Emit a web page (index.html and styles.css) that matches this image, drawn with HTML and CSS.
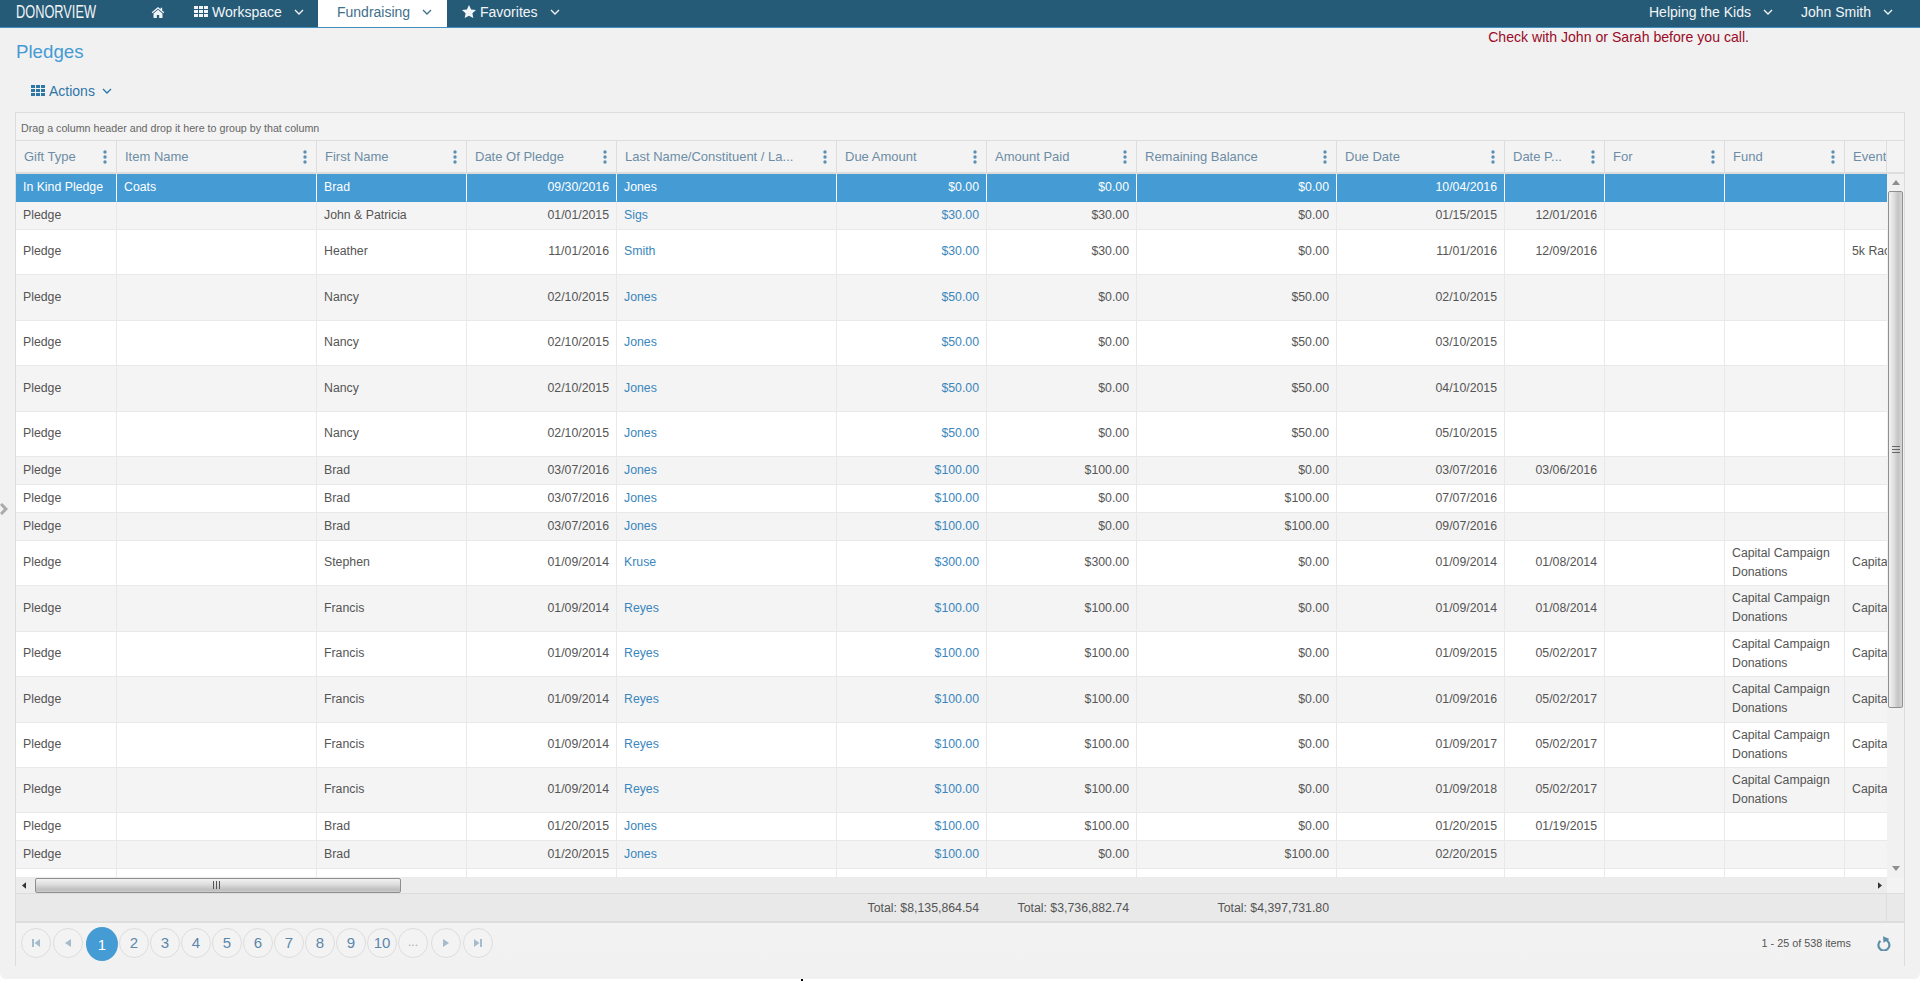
FILE: index.html
```html
<!DOCTYPE html>
<html lang="en">
<head>
<meta charset="utf-8">
<title>Pledges</title>
<link rel="stylesheet" href="styles.css">
</head>
<body>
<svg class="defs" aria-hidden="true">
  <symbol id="chev" viewBox="0 0 10 6"><path d="M1 1l4 4 4-4" fill="none" stroke="currentColor" stroke-width="1.3"/></symbol>
  <symbol id="grid" viewBox="0 0 14 11"><path fill="currentColor" d="M0 0h4v3H0zM5 0h4v3H5zM10 0h4v3h-4zM0 4h4v3H0zM5 4h4v3H5zM10 4h4v3h-4zM0 8h4v3H0zM5 8h4v3H5zM10 8h4v3h-4z"/></symbol>
  <symbol id="kebab" viewBox="0 0 4 14"><g fill="currentColor"><circle cx="2" cy="2" r="1.7"/><circle cx="2" cy="7" r="1.7"/><circle cx="2" cy="12" r="1.7"/></g></symbol>
</svg>
<div class="page">
  <nav class="nav">
    <span class="brand"><span class="brand-text">DONORVIEW</span></span>
    <a class="nav-home"><svg class="home" viewBox="0 0 16 14"><path fill="currentColor" d="M8 0 0 6.700l1 1.200L8 2.100l7 5.800 1-1.200-2.700-2.300V1h-2v2z"/><path fill="currentColor" d="M8 3.500 2.300 8.300V14h4.200v-3.700h3V14h4.200V8.300z"/></svg></a>
    <a class="nav-item nav-work"><svg class="ico-grid"><use href="#grid"/></svg>Workspace<svg class="chev"><use href="#chev"/></svg></a>
    <a class="nav-item nav-active">Fundraising<svg class="chev"><use href="#chev"/></svg></a>
    <a class="nav-item nav-fav"><svg class="star" viewBox="0 0 14 13"><path fill="currentColor" d="M7 0l2.100 4.400 4.900.6-3.600 3.300.9 4.700L7 10.700 2.700 13l.9-4.700L0 5l4.900-.6z"/></svg>Favorites<svg class="chev"><use href="#chev"/></svg></a>
    <a class="nav-item nav-org">Helping the Kids<svg class="chev"><use href="#chev"/></svg></a>
    <a class="nav-item nav-user">John Smith<svg class="chev"><use href="#chev"/></svg></a>
  </nav>
  <div class="titlebar">
    <h1 class="title">Pledges</h1>
    <p class="note">Check with John or Sarah before you call.</p>
  </div>
  <div class="actions"><svg class="ico-grid"><use href="#grid"/></svg>Actions<svg class="chev"><use href="#chev"/></svg></div>
  <svg class="side-handle" viewBox="0 0 8 12"><path d="M1 1l5 5-5 5" fill="none" stroke="currentColor" stroke-width="3"/></svg>

  <section class="grid">
    <div class="group-bar">Drag a column header and drop it here to group by that column</div>
    <div class="grid-head">
      <div class="clip">
        <table class="tbl head-tbl">
          <colgroup><col class="c1"><col class="c2"><col class="c3"><col class="c4"><col class="c5"><col class="c6"><col class="c7"><col class="c8"><col class="c9"><col class="c10"><col class="c11"><col class="c12"><col class="c13"></colgroup>
          <thead><tr>
            <th><div class="th"><span>Gift Type</span><svg class="kebab"><use href="#kebab"/></svg></div></th>
            <th><div class="th"><span>Item Name</span><svg class="kebab"><use href="#kebab"/></svg></div></th>
            <th><div class="th"><span>First Name</span><svg class="kebab"><use href="#kebab"/></svg></div></th>
            <th><div class="th"><span>Date Of Pledge</span><svg class="kebab"><use href="#kebab"/></svg></div></th>
            <th><div class="th"><span>Last Name/Constituent / La...</span><svg class="kebab"><use href="#kebab"/></svg></div></th>
            <th><div class="th"><span>Due Amount</span><svg class="kebab"><use href="#kebab"/></svg></div></th>
            <th><div class="th"><span>Amount Paid</span><svg class="kebab"><use href="#kebab"/></svg></div></th>
            <th><div class="th"><span>Remaining Balance</span><svg class="kebab"><use href="#kebab"/></svg></div></th>
            <th><div class="th"><span>Due Date</span><svg class="kebab"><use href="#kebab"/></svg></div></th>
            <th><div class="th"><span>Date P...</span><svg class="kebab"><use href="#kebab"/></svg></div></th>
            <th><div class="th"><span>For</span><svg class="kebab"><use href="#kebab"/></svg></div></th>
            <th><div class="th"><span>Fund</span><svg class="kebab"><use href="#kebab"/></svg></div></th>
            <th><div class="th"><span>Event</span></div></th>
          </tr></thead>
        </table>
      </div>
    </div>
    <div class="grid-body">
      <div class="clip">
        <table class="tbl body-tbl">
          <colgroup><col class="c1"><col class="c2"><col class="c3"><col class="c4"><col class="c5"><col class="c6"><col class="c7"><col class="c8"><col class="c9"><col class="c10"><col class="c11"><col class="c12"><col class="c13"></colgroup>
          <tbody>
            <tr class="s selected"><td>In Kind Pledge</td><td>Coats</td><td>Brad</td><td class="r">09/30/2016</td><td>Jones</td><td class="r">$0.00</td><td class="r">$0.00</td><td class="r">$0.00</td><td class="r">10/04/2016</td><td class="r"></td><td></td><td></td><td></td></tr>
            <tr class="s alt"><td>Pledge</td><td></td><td>John &amp; Patricia</td><td class="r">01/01/2015</td><td class="l">Sigs</td><td class="r l">$30.00</td><td class="r">$30.00</td><td class="r">$0.00</td><td class="r">01/15/2015</td><td class="r">12/01/2016</td><td></td><td></td><td></td></tr>
            <tr class="t"><td>Pledge</td><td></td><td>Heather</td><td class="r">11/01/2016</td><td class="l">Smith</td><td class="r l">$30.00</td><td class="r">$30.00</td><td class="r">$0.00</td><td class="r">11/01/2016</td><td class="r">12/09/2016</td><td></td><td></td><td class="ev">5k Race</td></tr>
            <tr class="u alt"><td>Pledge</td><td></td><td>Nancy</td><td class="r">02/10/2015</td><td class="l">Jones</td><td class="r l">$50.00</td><td class="r">$0.00</td><td class="r">$50.00</td><td class="r">02/10/2015</td><td class="r"></td><td></td><td></td><td></td></tr>
            <tr class="t"><td>Pledge</td><td></td><td>Nancy</td><td class="r">02/10/2015</td><td class="l">Jones</td><td class="r l">$50.00</td><td class="r">$0.00</td><td class="r">$50.00</td><td class="r">03/10/2015</td><td class="r"></td><td></td><td></td><td></td></tr>
            <tr class="u alt"><td>Pledge</td><td></td><td>Nancy</td><td class="r">02/10/2015</td><td class="l">Jones</td><td class="r l">$50.00</td><td class="r">$0.00</td><td class="r">$50.00</td><td class="r">04/10/2015</td><td class="r"></td><td></td><td></td><td></td></tr>
            <tr class="t"><td>Pledge</td><td></td><td>Nancy</td><td class="r">02/10/2015</td><td class="l">Jones</td><td class="r l">$50.00</td><td class="r">$0.00</td><td class="r">$50.00</td><td class="r">05/10/2015</td><td class="r"></td><td></td><td></td><td></td></tr>
            <tr class="s alt"><td>Pledge</td><td></td><td>Brad</td><td class="r">03/07/2016</td><td class="l">Jones</td><td class="r l">$100.00</td><td class="r">$100.00</td><td class="r">$0.00</td><td class="r">03/07/2016</td><td class="r">03/06/2016</td><td></td><td></td><td></td></tr>
            <tr class="s"><td>Pledge</td><td></td><td>Brad</td><td class="r">03/07/2016</td><td class="l">Jones</td><td class="r l">$100.00</td><td class="r">$0.00</td><td class="r">$100.00</td><td class="r">07/07/2016</td><td class="r"></td><td></td><td></td><td></td></tr>
            <tr class="s alt"><td>Pledge</td><td></td><td>Brad</td><td class="r">03/07/2016</td><td class="l">Jones</td><td class="r l">$100.00</td><td class="r">$0.00</td><td class="r">$100.00</td><td class="r">09/07/2016</td><td class="r"></td><td></td><td></td><td></td></tr>
            <tr class="t"><td>Pledge</td><td></td><td>Stephen</td><td class="r">01/09/2014</td><td class="l">Kruse</td><td class="r l">$300.00</td><td class="r">$300.00</td><td class="r">$0.00</td><td class="r">01/09/2014</td><td class="r">01/08/2014</td><td></td><td>Capital Campaign Donations</td><td class="ev">Capital</td></tr>
            <tr class="u alt"><td>Pledge</td><td></td><td>Francis</td><td class="r">01/09/2014</td><td class="l">Reyes</td><td class="r l">$100.00</td><td class="r">$100.00</td><td class="r">$0.00</td><td class="r">01/09/2014</td><td class="r">01/08/2014</td><td></td><td>Capital Campaign Donations</td><td class="ev">Capital</td></tr>
            <tr class="t"><td>Pledge</td><td></td><td>Francis</td><td class="r">01/09/2014</td><td class="l">Reyes</td><td class="r l">$100.00</td><td class="r">$100.00</td><td class="r">$0.00</td><td class="r">01/09/2015</td><td class="r">05/02/2017</td><td></td><td>Capital Campaign Donations</td><td class="ev">Capital</td></tr>
            <tr class="u alt"><td>Pledge</td><td></td><td>Francis</td><td class="r">01/09/2014</td><td class="l">Reyes</td><td class="r l">$100.00</td><td class="r">$100.00</td><td class="r">$0.00</td><td class="r">01/09/2016</td><td class="r">05/02/2017</td><td></td><td>Capital Campaign Donations</td><td class="ev">Capital</td></tr>
            <tr class="t"><td>Pledge</td><td></td><td>Francis</td><td class="r">01/09/2014</td><td class="l">Reyes</td><td class="r l">$100.00</td><td class="r">$100.00</td><td class="r">$0.00</td><td class="r">01/09/2017</td><td class="r">05/02/2017</td><td></td><td>Capital Campaign Donations</td><td class="ev">Capital</td></tr>
            <tr class="t alt"><td>Pledge</td><td></td><td>Francis</td><td class="r">01/09/2014</td><td class="l">Reyes</td><td class="r l">$100.00</td><td class="r">$100.00</td><td class="r">$0.00</td><td class="r">01/09/2018</td><td class="r">05/02/2017</td><td></td><td>Capital Campaign Donations</td><td class="ev">Capital</td></tr>
            <tr class="s"><td>Pledge</td><td></td><td>Brad</td><td class="r">01/20/2015</td><td class="l">Jones</td><td class="r l">$100.00</td><td class="r">$100.00</td><td class="r">$0.00</td><td class="r">01/20/2015</td><td class="r">01/19/2015</td><td></td><td></td><td></td></tr>
            <tr class="s alt"><td>Pledge</td><td></td><td>Brad</td><td class="r">01/20/2015</td><td class="l">Jones</td><td class="r l">$100.00</td><td class="r">$0.00</td><td class="r">$100.00</td><td class="r">02/20/2015</td><td class="r"></td><td></td><td></td><td></td></tr>
            <tr class="s"><td></td><td></td><td></td><td></td><td></td><td></td><td></td><td></td><td></td><td></td><td></td><td></td><td></td></tr>
          </tbody>
        </table>
      </div>
      <div class="vscroll">
        <svg class="arrow" viewBox="0 0 8 5"><path d="M4 0l4 5H0z" fill="currentColor"/></svg>
        <div class="vthumb"><svg class="vgrip" viewBox="0 0 8 7"><path d="M0 .5h8M0 3.500h8M0 6.500h8" stroke="currentColor"/></svg></div>
        <svg class="arrow arrow-end" viewBox="0 0 8 5"><path d="M4 5L0 0h8z" fill="currentColor"/></svg>
      </div>
    </div>
    <div class="hscroll">
      <svg class="harrow" viewBox="0 0 5 8"><path d="M0 4l5-4v8z" fill="currentColor"/></svg>
      <div class="hthumb"><svg class="hgrip" viewBox="0 0 7 8"><path d="M.5 0v8M3.500 0v8M6.500 0v8" stroke="currentColor"/></svg></div>
      <svg class="harrow harrow-end" viewBox="0 0 5 8"><path d="M5 4L0 8V0z" fill="currentColor"/></svg>
    </div>
    <div class="grid-foot">
      <div class="clip">
        <table class="tbl foot-tbl">
          <colgroup><col class="c1"><col class="c2"><col class="c3"><col class="c4"><col class="c5"><col class="c6"><col class="c7"><col class="c8"><col class="c9"><col class="c10"><col class="c11"><col class="c12"><col class="c13"></colgroup>
          <tbody><tr><td></td><td></td><td></td><td></td><td></td><td class="r">Total: $8,135,864.54</td><td class="r">Total: $3,736,882.74</td><td class="r">Total: $4,397,731.80</td><td></td><td></td><td></td><td></td><td></td></tr></tbody>
        </table>
      </div>
    </div>
    <div class="pager">
      <a class="pg pg-nav pg-first"><svg class="pg-ico" viewBox="0 0 8 8"><path fill="currentColor" d="M0 0h2v8H0zM8 0v8L2.500 4z"/></svg></a>
      <a class="pg pg-nav pg-prev"><svg class="pg-ico" viewBox="0 0 6 8"><path fill="currentColor" d="M6 0v8L0 4z"/></svg></a>
      <a class="pg pg-on">1</a>
      <a class="pg">2</a><a class="pg">3</a><a class="pg">4</a><a class="pg">5</a><a class="pg">6</a><a class="pg">7</a><a class="pg">8</a><a class="pg">9</a><a class="pg pg-wide">10</a><a class="pg pg-more">...</a>
      <a class="pg pg-nav pg-next"><svg class="pg-ico" viewBox="0 0 6 8"><path fill="currentColor" d="M0 0v8l6-4z"/></svg></a>
      <a class="pg pg-nav pg-last"><svg class="pg-ico" viewBox="0 0 8 8"><path fill="currentColor" d="M0 0v8l5.500-4zM6 0h2v8H6z"/></svg></a>
      <span class="pg-info">1 - 25 of 538 items</span>
      <svg class="refresh" viewBox="0 0 14 15"><path d="M3.400 4.800A5.500 5.500 0 1 0 8 3.700" fill="none" stroke="currentColor" stroke-width="2.200"/><path d="M6 .3l6.500 2.700-6 3.700z" fill="currentColor"/></svg>
    </div>
  </section>
</div>
<span class="cursor"></span>
</body>
</html>
```
FILE: styles.css
```css
* { box-sizing: border-box; }
html, body { margin: 0; height: 981px; overflow: hidden; background: #fff; }
body { position: relative; font-family: "Liberation Sans", Arial, sans-serif; color: #555; }
.defs { display: none; }
.page { position: relative; height: 979px; background: #f1f1f1; border-radius: 0 0 6px 6px; overflow: hidden; }
.cursor { position: absolute; left: 801px; top: 979px; width: 2px; height: 2px; background: #000; }

.nav { display: flex; align-items: stretch; height: 28px; background: #265b78; border-bottom: 1px solid #3f8fc0; color: #f2f5f7; font-size: 14px; line-height: 24px; }
.brand { width: 151px; padding-left: 16px; font-size: 18px; line-height: 25px; }
.brand-text { display: inline-block; transform: scaleX(.71); transform-origin: left center; }
.nav-home { width: 43px; display: flex; align-items: center; }
.home { width: 14px; height: 11px; margin-top: -3px; }
.nav-item { display: flex; align-items: flex-start; }
.nav-work { width: 124px; }
.nav-active { width: 129px; background: #fff; color: #3f6f8b; padding-left: 19px; }
.nav-fav { width: 120px; padding-left: 15px; }
.nav-org { margin-left: auto; width: 152px; }
.nav-user { width: 119px; }
.chev { width: 10px; height: 6px; margin: 9px 0 0 12px; }
.ico-grid { width: 14px; height: 11px; margin: 6px 4px 0 0; }
.star { width: 14px; height: 13px; margin: 5px 4px 0 0; }

.titlebar { display: flex; height: 50px; padding-left: 16px; }
.title { margin: 13px 0 0; font-size: 18.700px; line-height: 22px; font-weight: 400; color: #459bd4; }
.note { margin: 0 171px 0 auto; font-size: 14.100px; line-height: 18px; color: #9b0a26; }
.actions { display: flex; align-items: flex-start; height: 34px; padding: 3px 0 0 31px; color: #2d76a8; font-size: 14px; line-height: 20px; }
.actions .ico-grid { margin: 4px 4px 0 0; }
.actions .chev { margin: 7px 0 0 7px; }
.side-handle { position: absolute; left: 0; top: 503px; width: 8px; height: 12px; color: #aaa; }

.grid { margin-left: 15px; width: 1890px; height: 854px; border: 1px solid #ddd; border-bottom: 0; display: flex; flex-direction: column; background: #f3f3f3; }
.group-bar { flex: none; height: 28px; padding: 9px 0 0 5px; font-size: 10.700px; line-height: 12px; color: #666; border-bottom: 1px solid #ddd; }
.grid-head { flex: none; height: 33px; border-bottom: 2px solid #ddd; }
.clip { width: 1871px; overflow: hidden; height: 100%; }
.grid-head .clip { border-right: 1px solid #ddd; }

.tbl { border-collapse: separate; border-spacing: 0; table-layout: fixed; width: 1958px; }
.c1 { width: 100px; } .c2 { width: 200px; } .c3 { width: 150px; } .c4 { width: 150px; }
.c5 { width: 220px; } .c6 { width: 150px; } .c7 { width: 150px; } .c8 { width: 200px; }
.c9 { width: 168px; } .c10 { width: 100px; } .c11 { width: 120px; } .c12 { width: 120px; } .c13 { width: 130px; }

.head-tbl th { height: 31px; padding: 0; font-weight: 400; font-size: 13px; color: #6c8da5; text-align: left; border-left: 1px solid #ddd; }
.head-tbl th:first-child { border-left: 0; }
.th { display: flex; justify-content: space-between; align-items: center; padding: 0 9px 0 8px; white-space: nowrap; }
.kebab { width: 4px; height: 14px; color: #5b8fb3; flex: none; }

.grid-body { flex: none; display: flex; height: 703px; }
.body-tbl td { padding: 0 7px 1px 7px; font-size: 12.300px; line-height: 19px; color: #555; border-left: 1px solid #e9e9e9; border-bottom: 1px solid #e9e9e9; background: #fff; }
.body-tbl td:first-child { border-left: 0; }
.body-tbl .alt td { background: #f4f4f4; }
.body-tbl .selected td { background: #459bd4; color: #fff; border-left-color: #fff; border-bottom-color: #459bd4; }
.body-tbl tr.selected td:first-child { border-left: 0; }
.s { height: 28px; } .t { height: 45px; } .u { height: 46px; }
.r { text-align: right; }
.body-tbl .l { color: #3a86bd; }
.ev { white-space: nowrap; }

.vscroll { flex: none; width: 17px; display: flex; flex-direction: column; align-items: flex-start; padding-left: 1px; background: #f1f1f1; color: #8e8e8e; }
.arrow { width: 8px; height: 5px; margin: 6px 0 6px 4px; flex: none; }
.arrow-end { margin: auto 0 6px 4px; }
.vthumb { flex: none; width: 15px; height: 517px; border: 1px solid #8f8f8f; border-radius: 2px; background: linear-gradient(90deg, #f2f2f2, #e0e0e0 35%, #c4c4c4 70%, #d6d6d6); display: flex; align-items: center; justify-content: center; color: #666; }
.vgrip { width: 8px; height: 7px; margin-top: 0; }

.hscroll { flex: none; display: flex; align-items: center; height: 16px; width: 1871px; background: #ececec; color: #333; }
.harrow { width: 4px; height: 7px; margin: 0 6px 0 6px; flex: none; }
.harrow-end { margin: 0 5px 0 auto; }
.hthumb { flex: none; width: 366px; height: 15px; margin-left: 3px; border: 1px solid #8f8f8f; border-radius: 2px; background: linear-gradient(#f2f2f2, #dedede 40%, #bdbdbd 85%, #cfcfcf); display: flex; align-items: center; justify-content: center; color: #555; }
.hgrip { width: 7px; height: 8px; margin-left: -3px; }

.grid-foot { flex: none; height: 30px; background: #e9e9e9; border-top: 1px solid #ddd; border-bottom: 2px solid #ddd; }
.grid-foot .clip { border-right: 1px solid #ddd; }
.foot-tbl td { height: 27px; padding: 0 7px; font-size: 12.300px; color: #555; white-space: nowrap; }

.pager { flex: 1; display: flex; align-items: flex-start; padding: 4px 0 0 5px; background: linear-gradient(#f3f3f3, #f1f1f1); }
.pg { flex: none; display: flex; align-items: center; justify-content: center; width: 30px; height: 30px; padding-bottom: 2px; margin-top: 1px; margin-right: 1px; border: 1px solid #ddd; border-radius: 50%; font-size: 15px; color: #5b87ab; background: #f3f3f3; }
.pg-nav { color: #a5bccb; padding-bottom: 0; }
.pg-first { margin-right: 2px; }
.pg-prev { margin-right: 3px; }
.pg-ico { width: 8px; height: 8px; }
.pg-on { width: 32px; height: 34px; margin-top: 0; margin-right: 1px; border: 0; background: #459bd4; color: #fff; padding-bottom: 0; }
.pg-more { font-size: 12px; color: #aaa; margin-right: 3px; }
.pg-next { margin-right: 2px; }
.pg-info { margin: 9px 0 0 auto; font-size: 10.800px; line-height: 14px; color: #555; }
.refresh { width: 14px; height: 15px; margin: 9px 13px 0 26px; color: #5f8ea8; flex: none; }
```
